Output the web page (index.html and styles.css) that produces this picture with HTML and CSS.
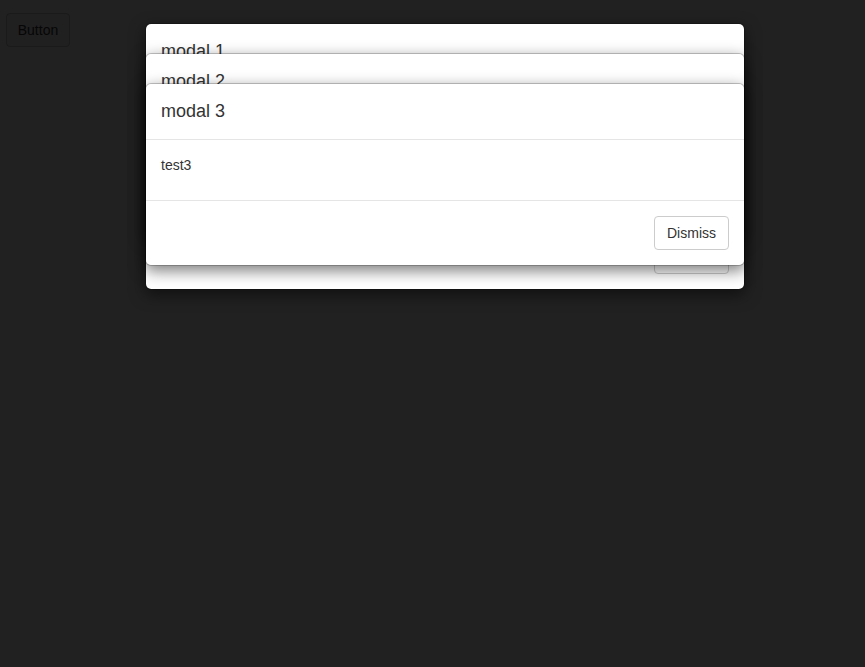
FILE: index.html
```html
<!DOCTYPE html>
<html>
<head>
<meta charset="utf-8">
<link rel="stylesheet" href="styles.css">
</head>
<body>
<button class="btn btn-dim">Button</button>
<div class="modal modal-1">
  <div class="modal-header"><h4 class="modal-title">modal 1</h4></div>
  <div class="modal-body modal-body-tall"><p>test1</p></div>
  <div class="modal-footer"><button class="btn">Dismiss</button></div>
</div>
<div class="modal modal-2">
  <div class="modal-header"><h4 class="modal-title">modal 2</h4></div>
  <div class="modal-body"><p>test2</p></div>
  <div class="modal-footer"><button class="btn">Dismiss</button></div>
</div>
<div class="modal modal-3">
  <div class="modal-header"><h4 class="modal-title">modal 3</h4></div>
  <div class="modal-body"><p>test3</p></div>
  <div class="modal-footer"><button class="btn">Dismiss</button></div>
</div>
</body>
</html>
```
FILE: styles.css
```css
html, body {
  margin: 0;
  padding: 0;
  height: 100%;
}
body {
  background: #212121;
  font-family: "Liberation Sans", Arial, sans-serif;
  font-size: 14px;
  line-height: 20px;
  color: #333;
  position: relative;
  overflow: hidden;
}
.btn {
  display: inline-block;
  box-sizing: border-box;
  height: 34px;
  padding: 6px 12px;
  font-family: "Liberation Sans", Arial, sans-serif;
  font-size: 14px;
  line-height: 20px;
  color: #333;
  background: #fff;
  border: 1px solid #ccc;
  border-radius: 4px;
  cursor: pointer;
}
.btn-dim {
  margin: 13px 0 0 6px;
  width: 64px;
  padding: 6px 0;
  text-align: center;
  background: #202020;
  border-color: #1a1a1a;
  color: #060606;
}
.modal {
  position: absolute;
  left: 145px;
  width: 600px;
  box-sizing: border-box;
  background: #fff;
  border: 1px solid rgba(0, 0, 0, 0.2);
  border-radius: 6px;
  box-shadow: 0 5px 15px rgba(0, 0, 0, 0.5);
  background-clip: padding-box;
}
.modal-1 { top: 23px; }
.modal-2 { top: 53px; }
.modal-3 { top: 83px; }
.modal-header {
  padding: 15px;
  border-bottom: 1px solid #e5e5e5;
}
.modal-title {
  margin: 0;
  font-size: 18px;
  font-weight: 400;
  line-height: 25px;
  color: #333;
}
.modal-body {
  padding: 15px;
}
.modal-body p {
  margin: 0 0 10px;
}
.modal-body-tall {
  min-height: 114px;
}
.modal-footer {
  padding: 15px;
  text-align: right;
  border-top: 1px solid #e5e5e5;
}
.modal-footer .btn {
  vertical-align: top;
}
```
